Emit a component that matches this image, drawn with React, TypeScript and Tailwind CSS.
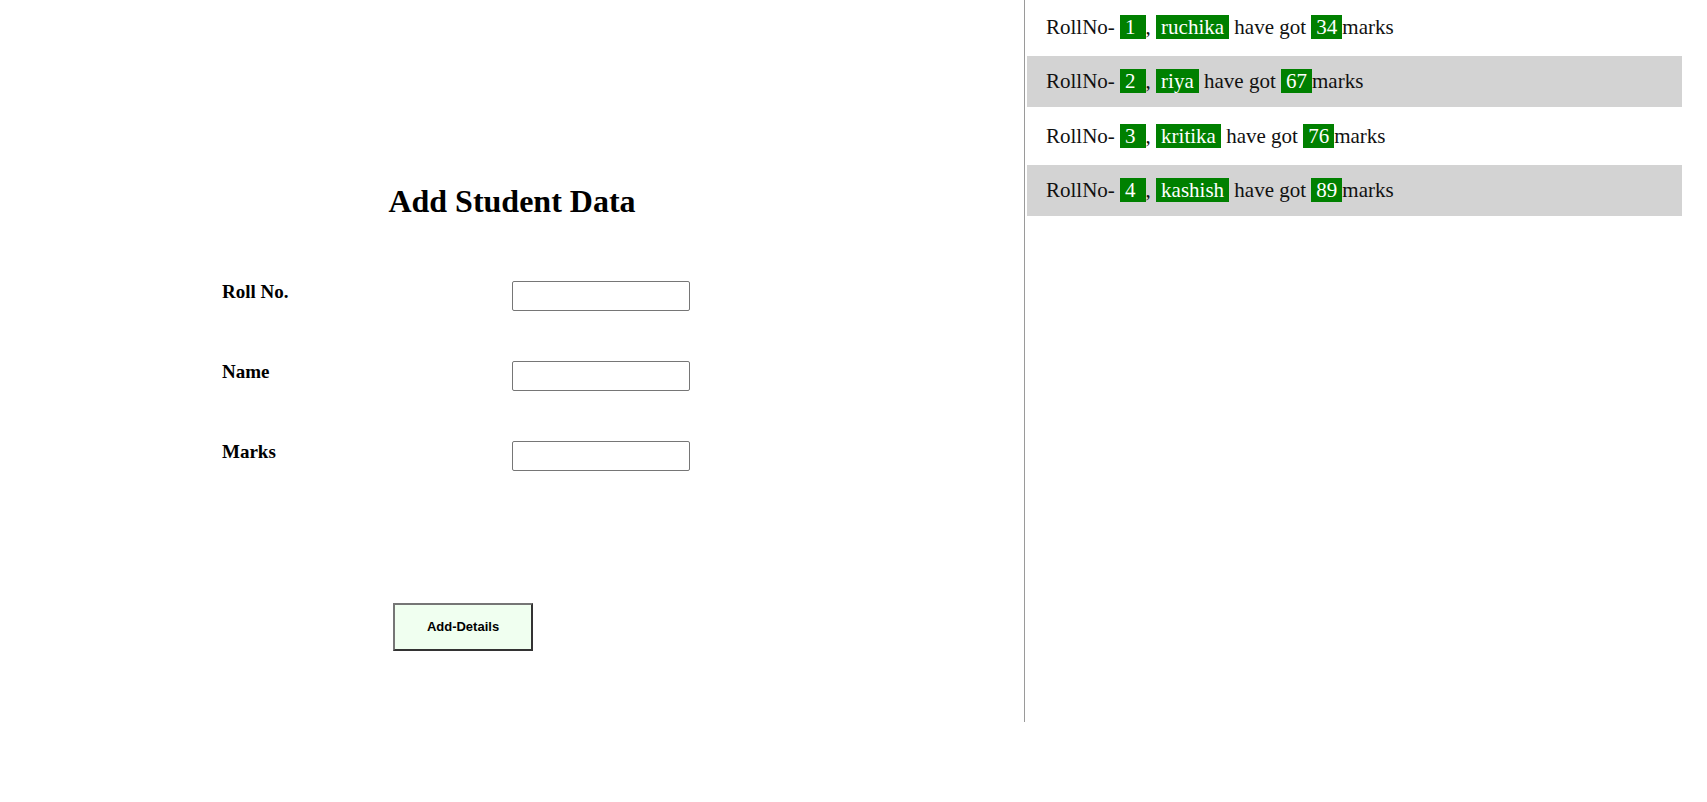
import React from 'react';

type Student = { roll: number; name: string; marks: number };

const students: Student[] = [
  { roll: 1, name: 'ruchika', marks: 34 },
  { roll: 2, name: 'riya', marks: 67 },
  { roll: 3, name: 'kritika', marks: 76 },
  { roll: 4, name: 'kashish', marks: 89 },
];

const fields = ['Roll No.', 'Name', 'Marks'];

export default function App() {
  return (
    <div className="flex w-[1707px] h-[802px] bg-white text-black font-['Liberation_Serif','Times_New_Roman',serif]">
      {/* form side */}
      <div className="w-[1025px] h-[722px] shrink-0 border-r border-[#9a9a9a] flex flex-col">
        <h1 className="mt-[183px] text-center text-[32px] leading-[36.8px] font-bold">Add Student Data</h1>
        <div className="mt-[61px] flex flex-col gap-[50px]">
          {fields.map((f) => (
            <div key={f} className="flex items-start h-[30px]">
              <label className="ml-[222px] w-[290px] text-[19px] leading-[21.85px] font-bold">{f}</label>
              <input
                type="text"
                className="w-[178px] h-[30px] border border-[#767676] rounded-[2px] bg-white px-1 outline-none"
              />
            </div>
          ))}
        </div>
        <button
          type="button"
          className="mt-[132px] ml-[393px] w-[140px] h-[48px] bg-[#f0fff0] border-2 border-t-[#767676] border-l-[#767676] border-r-[#333] border-b-[#333] font-['Liberation_Sans',Arial,sans-serif] text-[13px] font-bold text-black"
        >
          Add-Details
        </button>
      </div>

      {/* list side */}
      <div className="ml-[2px] w-[655px] pt-[1.5px] flex flex-col gap-[3.4px]">
        {students.map((s, i) => (
          <div
            key={s.roll}
            className={`h-[51px] flex items-center pl-[19px] text-[21px] leading-[24px] text-[#111] whitespace-pre ${
              i % 2 === 1 ? 'bg-[#d3d3d3]' : 'bg-white'
            }`}
          >
            <span>
              RollNo- <span className="bg-[#008000] text-white pl-[5px] pr-[10px]">{s.roll}</span>,{' '}
              <span className="bg-[#008000] text-white px-[5px]">{s.name}</span> have got{' '}
              <span className="bg-[#008000] text-white px-[5px]">{s.marks}</span>marks
            </span>
          </div>
        ))}
      </div>
    </div>
  );
}
